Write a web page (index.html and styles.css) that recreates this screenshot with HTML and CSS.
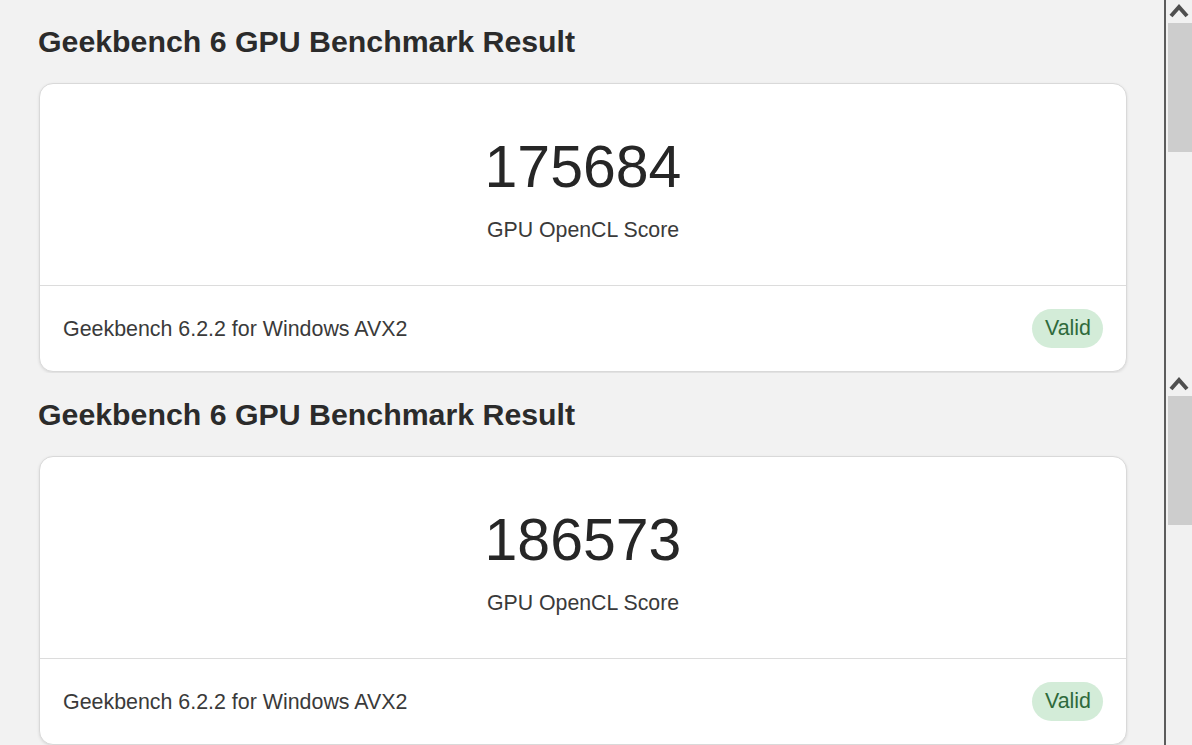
FILE: index.html
```html
<!DOCTYPE html>
<html lang="en">
<head>
<meta charset="utf-8">
<title>Geekbench 6 GPU Benchmark Result</title>
<link rel="stylesheet" href="styles.css">
</head>
<body>
  <section class="panel">
    <div class="content">
      <h1 class="title">Geekbench 6 GPU Benchmark Result</h1>
      <div class="card">
        <div class="card-main">
          <div class="score">175684</div>
          <div class="score-label">GPU OpenCL Score</div>
        </div>
        <div class="card-footer">
          <span class="version">Geekbench 6.2.2 for Windows AVX2</span>
          <span class="badge">Valid</span>
        </div>
      </div>
    </div>
    <div class="scrollbar">
      <svg class="arrow" width="22" height="16" viewBox="0 0 22 16"><polyline points="3,14 11,5 19,14" fill="none" stroke="#4f4f4f" stroke-width="4"/></svg>
      <div class="thumb"></div>
    </div>
  </section>
  <section class="panel panel-b">
    <div class="content">
      <h1 class="title">Geekbench 6 GPU Benchmark Result</h1>
      <div class="card">
        <div class="card-main">
          <div class="score">186573</div>
          <div class="score-label">GPU OpenCL Score</div>
        </div>
        <div class="card-footer">
          <span class="version">Geekbench 6.2.2 for Windows AVX2</span>
          <span class="badge">Valid</span>
        </div>
      </div>
    </div>
    <div class="scrollbar">
      <svg class="arrow" width="22" height="16" viewBox="0 0 22 16"><polyline points="3,14 11,5 19,14" fill="none" stroke="#4f4f4f" stroke-width="4"/></svg>
      <div class="thumb"></div>
    </div>
  </section>
</body>
</html>
```
FILE: styles.css
```css
* { box-sizing: border-box; }
html, body {
  margin: 0;
  padding: 0;
  background: #f2f2f2;
  font-family: "Liberation Sans", Arial, sans-serif;
  overflow: hidden;
}
.panel {
  display: flex;
  height: 373px;
  overflow: hidden;
  background: #f2f2f2;
}
.panel-b { height: 372px; }
.content {
  flex: 1;
  padding: 24px 0 0 38px;
}
.title {
  margin: 0;
  font-size: 30.3px;
  line-height: 36px;
  font-weight: bold;
  color: #2b2b2b;
}
.card {
  margin: 23px 0 0 1px;
  width: 1088px;
  background: #fff;
  border: 1px solid #d9d9d9;
  border-radius: 14px;
  box-shadow: 0 1px 3px rgba(0,0,0,0.10);
}
.card-main {
  padding: 54px 0 43px;
  text-align: center;
  border-bottom: 1px solid #dcdcdc;
}
.score {
  font-size: 59px;
  line-height: 58px;
  color: #262626;
}
.score-label {
  margin-top: 22px;
  font-size: 21.3px;
  line-height: 24px;
  color: #3a3a3a;
}
.card-footer {
  height: 85px;
  padding: 0 23px;
  display: flex;
  align-items: center;
  justify-content: space-between;
}
.version {
  font-size: 21.4px;
  line-height: 24px;
  color: #3a3a3a;
}
.badge {
  font-size: 21.4px;
  line-height: 24px;
  padding: 7px 12px 8px 13px;
  border-radius: 20px;
  background: #d3ecd8;
  color: #2f6a3c;
}
.scrollbar {
  width: 28px;
  border-left: 2px solid #5c5c5c;
  background: #f1f1f1;
  display: flex;
  flex-direction: column;
  align-items: center;
  padding-top: 2px;
}
.arrow { display: block; }
.thumb {
  margin-top: 5px;
  margin-left: 1px;
  width: 24px;
  height: 129px;
  background: #cdcdcd;
}
```
